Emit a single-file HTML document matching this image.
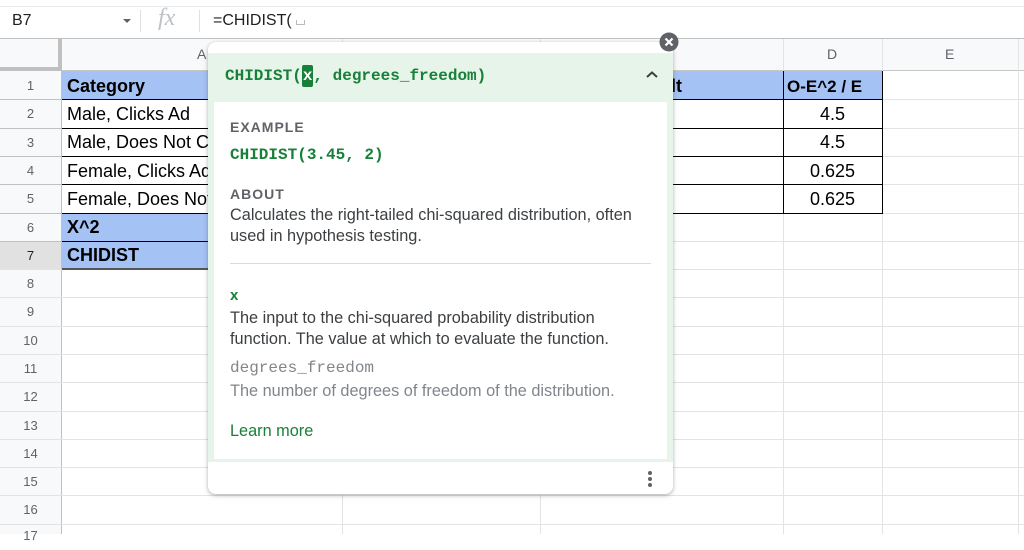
<!DOCTYPE html>
<html><head><meta charset="utf-8"><style>
*{margin:0;padding:0;box-sizing:border-box}
body{width:1024px;height:534px;overflow:hidden;background:#fff;font-family:"Liberation Sans",Arial,sans-serif;position:relative}
.a{position:absolute}
.h{position:absolute;left:0;width:1024px;height:1px;background:#e2e3e3}
.v{position:absolute;top:39px;width:1px;height:495px;background:#e2e3e3}
.rn{position:absolute;left:0;width:61px;text-align:center;font-size:13px;color:#5f6368;height:28px;line-height:28px}
.c{position:absolute;font-size:18px;color:#000;height:28px;line-height:31px;padding-left:5px;white-space:nowrap;overflow:hidden}
.bl{position:absolute;background:#000;height:1px}
.mono{font-family:"Liberation Mono","DejaVu Sans Mono",monospace}
.lab{font-size:14px;font-weight:bold;color:#5f6368;letter-spacing:1px}
.txt{font-size:16.3px;color:#3c4043;line-height:21px;white-space:nowrap}
</style></head><body>
<div class="h" style="top:6px;background:#e8eaed"></div>
<div class="a" style="left:12px;top:12px;font-size:16px;color:#202124">B7</div>
<div class="a" style="left:123px;top:19px;width:0;height:0;border-left:4px solid transparent;border-right:4px solid transparent;border-top:4px solid #5f6368"></div>
<div class="a" style="left:140px;top:10px;width:1px;height:22px;background:#e0e0e0"></div>
<div class="a" style="left:158px;top:5px;font-family:'Liberation Serif',serif;font-style:italic;font-size:24px;color:#bdc1c6">fx</div>
<div class="a" style="left:199px;top:10px;width:1px;height:22px;background:#e0e0e0"></div>
<div class="a" style="left:213px;top:12px;font-size:16px;color:#202124">=CHIDIST(<span style="display:inline-block;width:9px;height:5px;border:1px solid #bbb;border-top:none;margin-left:4px"></span></div>
<div class="a" style="left:0;top:38px;width:1024px;height:33px;background:#f8f9fa;border-top:1px solid #c0c0c0;border-bottom:1px solid #c4c7c5"></div>
<div class="a" style="left:0;top:39px;width:62px;height:495px;background:#f8f9fa"></div>
<div class="a" style="left:58px;top:39px;width:4px;height:32px;background:#c0c0c0"></div>
<div class="a" style="left:0;top:67px;width:62px;height:4px;background:#c0c0c0"></div>
<div class="a" style="left:0;top:241px;width:62px;height:28px;background:#e1e1e1"></div>
<div class="a" style="left:61px;top:39px;width:1px;height:495px;background:#c0c0c0"></div>
<div class="a" style="left:197px;top:46px;font-size:14px;color:#5f6368">A</div>
<div class="a" style="left:827px;top:46px;font-size:14px;color:#5f6368">D</div>
<div class="a" style="left:945px;top:46px;font-size:14px;color:#5f6368">E</div>
<div class="v" style="left:342px"></div><div class="v" style="left:540px"></div><div class="v" style="left:783px"></div><div class="v" style="left:882px"></div><div class="v" style="left:1018px"></div>
<div class="h" style="top:99px;left:62px"></div><div class="h" style="top:128px;left:62px"></div><div class="h" style="top:156px;left:62px"></div><div class="h" style="top:184px;left:62px"></div><div class="h" style="top:213px;left:62px"></div><div class="h" style="top:241px;left:62px"></div><div class="h" style="top:269px;left:0"></div><div class="h" style="top:297px;left:0"></div><div class="h" style="top:326px;left:0"></div><div class="h" style="top:354px;left:0"></div><div class="h" style="top:382px;left:0"></div><div class="h" style="top:411px;left:0"></div><div class="h" style="top:439px;left:0"></div><div class="h" style="top:467px;left:0"></div><div class="h" style="top:495px;left:0"></div><div class="h" style="top:524px;left:0"></div>
<div class="h" style="top:99px;width:62px;background:#c0c0c0"></div><div class="h" style="top:128px;width:62px;background:#c0c0c0"></div><div class="h" style="top:156px;width:62px;background:#c0c0c0"></div><div class="h" style="top:184px;width:62px;background:#c0c0c0"></div><div class="h" style="top:213px;width:62px;background:#c0c0c0"></div><div class="h" style="top:241px;width:62px;background:#c0c0c0"></div>
<div class="rn" style="top:72px">1</div><div class="rn" style="top:100px">2</div><div class="rn" style="top:129px">3</div><div class="rn" style="top:157px">4</div><div class="rn" style="top:185px">5</div><div class="rn" style="top:214px">6</div><div class="rn" style="top:242px;color:#202124">7</div><div class="rn" style="top:270px">8</div><div class="rn" style="top:298px">9</div><div class="rn" style="top:327px">10</div><div class="rn" style="top:355px">11</div><div class="rn" style="top:383px">12</div><div class="rn" style="top:412px">13</div><div class="rn" style="top:440px">14</div><div class="rn" style="top:468px">15</div><div class="rn" style="top:496px">16</div><div class="rn" style="top:522px">17</div>
<div class="a" style="left:62px;top:71px;width:820px;height:28px;background:#a4c2f4"></div>
<div class="a" style="left:62px;top:213px;width:280px;height:56px;background:#a4c2f4"></div>
<div class="bl" style="left:62px;top:99px;width:821px"></div><div class="bl" style="left:62px;top:128px;width:821px"></div><div class="bl" style="left:62px;top:156px;width:821px"></div><div class="bl" style="left:62px;top:184px;width:821px"></div><div class="bl" style="left:62px;top:213px;width:821px"></div><div class="bl" style="left:62px;top:241px;width:280px"></div><div class="bl" style="left:62px;top:268px;width:280px;height:2px;background:#555"></div>
<div class="a" style="left:783px;top:71px;width:1px;height:142px;background:#000"></div>
<div class="a" style="left:882px;top:71px;width:1px;height:142px;background:#000"></div>
<div class="c" style="left:62px;top:71px;font-weight:bold;width:280px">Category</div>
<div class="c" style="left:62px;top:99px">Male, Clicks Ad</div>
<div class="c" style="left:62px;top:127px">Male, Does Not Click Ad</div>
<div class="c" style="left:62px;top:156px">Female, Clicks Ad</div>
<div class="c" style="left:62px;top:184px">Female, Does Not Click Ad</div>
<div class="c" style="left:62px;top:212px;font-weight:bold">X^2</div>
<div class="c" style="left:62px;top:240px;font-weight:bold">CHIDIST</div>
<div class="c" style="left:622px;top:71px;font-weight:bold">Result</div>
<div class="c" style="left:783px;top:71px;font-weight:bold;padding-left:4px;font-size:17px">O-E^2 / E</div>
<div class="c" style="left:783px;top:99px;width:99px;text-align:center;padding:0">4.5</div>
<div class="c" style="left:783px;top:127px;width:99px;text-align:center;padding:0">4.5</div>
<div class="c" style="left:783px;top:156px;width:99px;text-align:center;padding:0">0.625</div>
<div class="c" style="left:783px;top:184px;width:99px;text-align:center;padding:0">0.625</div>
<div class="a" style="left:208px;top:42px;width:465px;height:452px;background:#fff;border-radius:8px;box-shadow:0 1px 3px rgba(60,64,67,.3),0 2px 6px rgba(60,64,67,.15)"></div>
<div class="a" style="left:208px;top:53px;width:465px;height:409px;background:#e6f4ea"></div>
<div class="a" style="left:214px;top:102px;width:453px;height:357px;background:#fff"></div>
<div class="a mono" style="left:225px;top:67px;font-size:16px;font-weight:bold;color:#188038">CHIDIST(<span style="background:#188038;color:#fff;padding:2px 1px;border-radius:2px">x</span>, degrees_freedom)</div>
<svg class="a" style="left:645px;top:70px" width="14" height="10"><path d="M2 7 L7 2.5 L12 7" fill="none" stroke="#3c4043" stroke-width="2"/></svg>
<div class="a lab" style="left:230px;top:119px">EXAMPLE</div>
<div class="a mono" style="left:230px;top:146px;font-size:16px;font-weight:bold;color:#188038">CHIDIST(3.45, 2)</div>
<div class="a lab" style="left:230px;top:186px">ABOUT</div>
<div class="a txt" style="left:230px;top:205px">Calculates the right-tailed chi-squared distribution, often<br>used in hypothesis testing.</div>
<div class="a" style="left:230px;top:263px;width:421px;height:1px;background:#dadce0"></div>
<div class="a" style="left:230px;top:287px;font-size:15px;font-weight:bold;color:#188038">x</div>
<div class="a txt" style="left:230px;top:308px">The input to the chi-squared probability distribution<br>function. The value at which to evaluate the function.</div>
<div class="a mono" style="left:230px;top:359px;font-size:16px;color:#80868b">degrees_freedom</div>
<div class="a txt" style="left:230px;top:381px;color:#80868b">The number of degrees of freedom of the distribution.</div>
<div class="a" style="left:230px;top:422px;font-size:16.3px;color:#188038">Learn more</div>
<div class="a" style="left:648px;top:471px;width:4px;height:4px;border-radius:2px;background:#5f6368;box-shadow:0 6px 0 #5f6368,0 12px 0 #5f6368"></div>
<svg class="a" style="left:659px;top:32px" width="20" height="20"><circle cx="10" cy="10" r="9.5" fill="#5f6368"/><path d="M6.5 6.5L13.5 13.5M13.5 6.5L6.5 13.5" stroke="#fff" stroke-width="2.2"/></svg>
</body></html>
